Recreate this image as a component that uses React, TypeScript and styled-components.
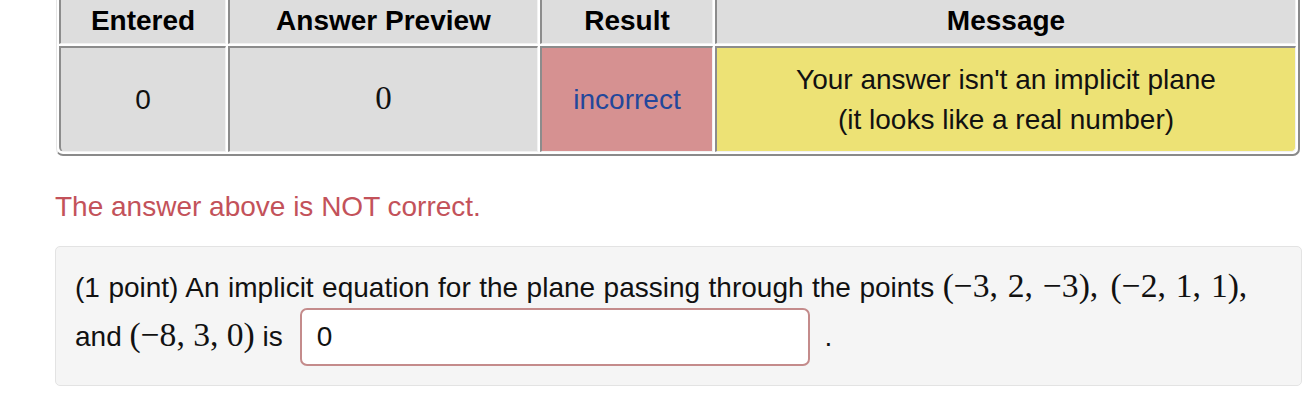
import styled, { createGlobalStyle } from 'styled-components';

const GlobalStyle = createGlobalStyle`
  body {
    margin: 0;
    background: #ffffff;
    font-family: "Liberation Sans", Arial, Helvetica, sans-serif;
    color: #111111;
  }
`;

const SANS = '"Liberation Sans", Arial, Helvetica, sans-serif';

const Page = styled.div`
  width: 1247px;
  padding: 0 0 0 55px;
  font-size: 28px;
  line-height: 40px;
`;

const ResultsTable = styled.table`
  margin: -7px 0 0 1px;
  width: 1244px;
  table-layout: fixed;
  border-collapse: separate;
  border-spacing: 2px;
  border-style: solid;
  border-width: 1px 2px 2px 1px;
  border-color: #e6e6e6 #8a8a8a #8a8a8a #e6e6e6;
  border-radius: 7px;
  font-family: ${SANS};
  font-size: 28px;
  line-height: 40px;
`;

const cellBorders = `
  box-sizing: border-box;
  border-style: solid;
  border-width: 2px 1px 1px 2px;
  border-color: #8c8c8c #f2f2f2 #f2f2f2 #8c8c8c;
  text-align: center;
  vertical-align: middle;
`;

const HeadCell = styled.th<{ $w: number }>`
  ${cellBorders}
  width: ${(p) => p.$w}px;
  padding: 3px 6px 2px;
  background: #dddddd;
  font-weight: bold;
  color: #000000;
`;

type Tone = 'plain' | 'error' | 'alert';

const toneBg: Record<Tone, string> = {
  plain: '#dddddd',
  error: '#d69191',
  alert: '#ede275',
};

const DataCell = styled.td<{ $tone?: Tone }>`
  ${cellBorders}
  padding: 12px 6px 11px;
  background: ${(p) => toneBg[p.$tone ?? 'plain']};
  color: ${(p) => (p.$tone === 'error' ? '#23479b' : '#111111')};
  &:first-child {
    border-bottom-left-radius: 5px;
  }
  &:last-child {
    border-bottom-right-radius: 5px;
  }
`;

const MathText = styled.span<{ $size?: number; $gap?: number }>`
  font-family: "Liberation Serif", "Times New Roman", serif;
  font-size: ${(p) => p.$size ?? 33.6}px;
  line-height: 1;
  word-spacing: ${(p) => p.$gap ?? 0}px;
  color: #111111;
`;

const LeadText = styled.span`
  word-spacing: 0.7px;
`;

const Feedback = styled.p`
  margin: 31px 0 19px;
  color: #c3525a;
  font-size: 28px;
  line-height: 40px;
`;

const ProblemWell = styled.div`
  box-sizing: border-box;
  width: 1247px;
  padding: 21px 19px 19px;
  background: #f5f5f5;
  border: 1px solid #e3e3e3;
  border-radius: 5px;
  font-size: 28px;
  line-height: 40px;
  color: #111111;
`;

const AnswerInput = styled.input`
  box-sizing: border-box;
  width: 510px;
  height: 58px;
  margin: 0 7px 0 17px;
  padding: 0 15px;
  border: 2px solid #c48b8b;
  border-radius: 7px;
  background: #ffffff;
  font-family: ${SANS};
  font-size: 28px;
  color: #111111;
  vertical-align: baseline;
  outline: none;
`;

const columns = [
  { label: 'Entered', width: 167 },
  { label: 'Answer Preview', width: 310 },
  { label: 'Result', width: 173 },
  { label: 'Message', width: 581 },
];

export default function App() {
  return (
    <>
      <GlobalStyle />
      <Page>
        <ResultsTable>
          <thead>
            <tr>
              {columns.map((c) => (
                <HeadCell key={c.label} $w={c.width}>
                  {c.label}
                </HeadCell>
              ))}
            </tr>
          </thead>
          <tbody>
            <tr>
              <DataCell>0</DataCell>
              <DataCell>
                <MathText $size={33}>0</MathText>
              </DataCell>
              <DataCell $tone="error">incorrect</DataCell>
              <DataCell $tone="alert">
                Your answer isn't an implicit plane
                <br />
                (it looks like a real number)
              </DataCell>
            </tr>
          </tbody>
        </ResultsTable>

        <Feedback>The answer above is NOT correct.</Feedback>

        <ProblemWell>
          <LeadText>
            (1 point) An implicit equation for the plane passing through the points{' '}
          </LeadText>
          <MathText $gap={1.5}>(−3, 2, −3)</MathText>
          <MathText $gap={4}>, </MathText>
          <MathText $gap={1.5}>(−2, 1, 1)</MathText>
          <MathText>,</MathText>
          <br />
          and <MathText>(−8, 3, 0)</MathText> is
          <AnswerInput readOnly defaultValue="0" />
          {' '}.
        </ProblemWell>
      </Page>
    </>
  );
}
